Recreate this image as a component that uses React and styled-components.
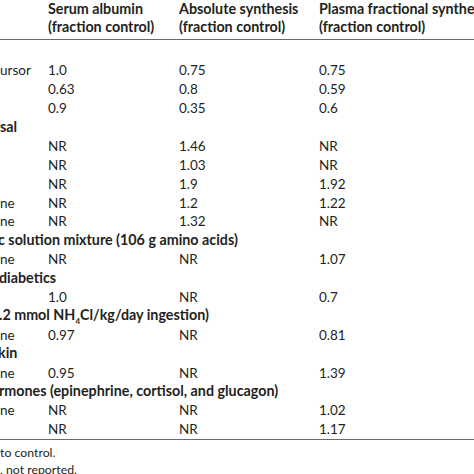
import React from "react";
import styled, { createGlobalStyle } from "styled-components";

const GlobalStyle = createGlobalStyle`
  html, body {
    margin: 0;
    padding: 0;
    background: #ffffff;
  }
  body {
    width: 474px;
    height: 474px;
    overflow: hidden;
    font-family: Lato, "Open Sans", sans-serif;
    color: #231f20;
  }
`;

const COLS = "48px 131px 140px 1fr";

const Table = styled.div`
  width: 474px;
  white-space: nowrap;
  overflow: hidden;
`;

const HeadRow = styled.div`
  display: grid;
  grid-template-columns: ${COLS};
  font-weight: 700;
  font-size: 14.3px;
  line-height: 18px;
  padding-bottom: 3px;
  border-bottom: 1px solid #6b6b6b;
`;

const Row = styled.div`
  display: grid;
  grid-template-columns: ${COLS};
  height: 18.9px;
  align-items: center;
  font-size: 13.5px;
`;

const Cell = styled.div`
  overflow: hidden;
`;

const Group = styled.div`
  height: 18.9px;
  line-height: 18.9px;
  font-size: 14.3px;
  font-weight: 700;
  margin-left: ${(p) => p.$shift || 0}px;
`;

const Sub = styled.sub`
  font-size: 8px;
`;

const Body = styled.div`
  padding-top: 2px;
  border-bottom: 1px solid #6b6b6b;
`;

const Notes = styled.div`
  padding-top: 4px;
  font-size: 12.3px;
  line-height: 17px;
`;

const rows = [
  { type: "row", cells: ["", "", "", ""] },
  { type: "row", cells: ["ursor", "1.0", "0.75", "0.75"] },
  { type: "row", cells: ["", "0.63", "0.8", "0.59"] },
  { type: "row", cells: ["", "0.9", "0.35", "0.6"] },
  { type: "group", label: "sal" },
  { type: "row", cells: ["", "NR", "1.46", "NR"] },
  { type: "row", cells: ["", "NR", "1.03", "NR"] },
  { type: "row", cells: ["", "NR", "1.9", "1.92"] },
  { type: "row", cells: ["ne", "NR", "1.2", "1.22"] },
  { type: "row", cells: ["ne", "NR", "1.32", "NR"] },
  { type: "group", label: "c solution mixture (106 g amino acids)", shift: -2 },
  { type: "row", cells: ["ne", "NR", "NR", "1.07"] },
  { type: "group", label: "diabetics", shift: -1 },
  { type: "row", cells: ["", "1.0", "NR", "0.7"] },
  {
    type: "group",
    label: (
      <>
        .2 mmol NH<Sub>4</Sub>Cl/kg/day ingestion)
      </>
    ),
    shift: -1,
  },
  { type: "row", cells: ["ne", "0.97", "NR", "0.81"] },
  { type: "group", label: "kin", shift: -2 },
  { type: "row", cells: ["ne", "0.95", "NR", "1.39"] },
  { type: "group", label: "rmones (epinephrine, cortisol, and glucagon)", shift: -1 },
  { type: "row", cells: ["ne", "NR", "NR", "1.02"] },
  { type: "row", cells: ["", "NR", "NR", "1.17"] },
];

export default function App() {
  return (
    <>
      <GlobalStyle />
      <Table>
        <HeadRow>
          <Cell />
          <Cell>
            Serum albumin
            <br />
            (fraction control)
          </Cell>
          <Cell>
            Absolute synthesis
            <br />
            (fraction control)
          </Cell>
          <Cell>
            Plasma fractional synthesis
            <br />
            (fraction control)
          </Cell>
        </HeadRow>
        <Body>
          {rows.map((r, i) =>
            r.type === "group" ? (
              <Group key={i} $shift={r.shift}>
                {r.label}
              </Group>
            ) : (
              <Row key={i}>
                {r.cells.map((c, j) => (
                  <Cell key={j}>{c}</Cell>
                ))}
              </Row>
            )
          )}
        </Body>
        <Notes>
          <div>to control.</div>
          <div>, not reported.</div>
        </Notes>
      </Table>
    </>
  );
}
